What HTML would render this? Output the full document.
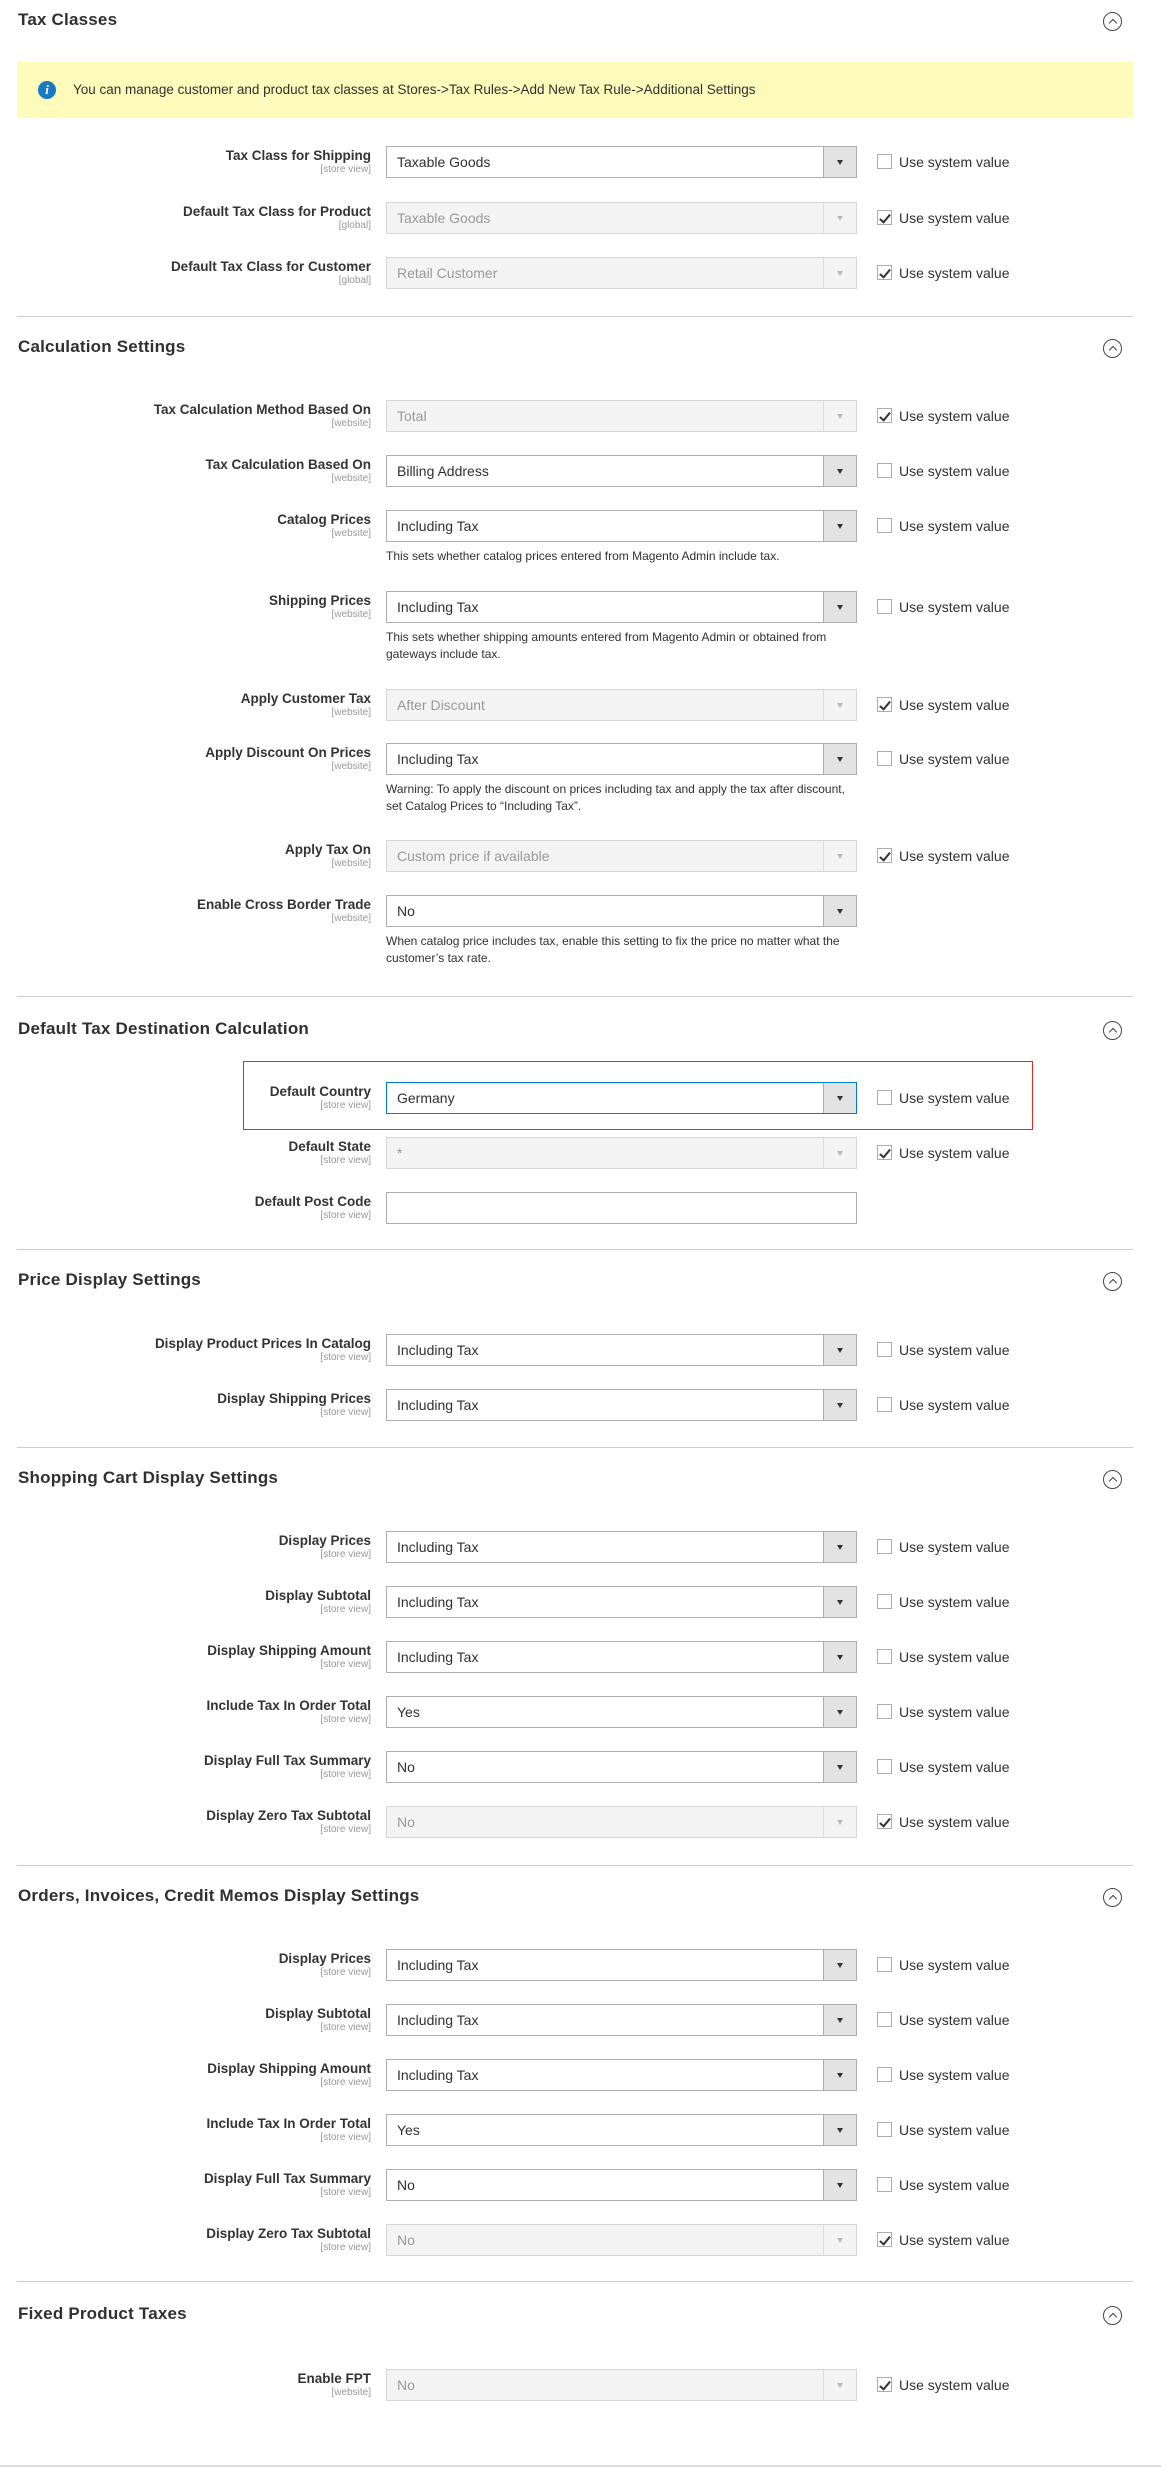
<!DOCTYPE html>
<html><head><meta charset="utf-8"><style>
*{box-sizing:border-box;margin:0;padding:0}
body{width:1161px;height:2467px;position:relative;background:#fff;font-family:"Liberation Sans",sans-serif;color:#303030;overflow:hidden}
.h{position:absolute;left:18px;font-size:17px;font-weight:bold;color:#303030;letter-spacing:0.2px}
.t{position:absolute;left:1103px;width:19px;height:19px;border:1px solid #444;border-radius:50%}
.t::after{content:"";position:absolute;left:6px;top:7px;width:5px;height:5px;border-left:1px solid #444;border-top:1px solid #444;transform:rotate(45deg)}
.sep{position:absolute;left:17px;width:1116px;height:1px;background:#ccc}
.r{position:absolute;left:0;width:1161px;height:32px}
.l{position:absolute;right:790px;top:2px;text-align:right;font-size:13.5px;font-weight:bold;line-height:16px;white-space:nowrap;color:#333}
.l span{display:block;font-size:10px;font-weight:normal;color:#999;line-height:12px}
.s{position:absolute;left:386px;top:0;width:471px;height:32px;border:1px solid #adadad;background:#fff;font-size:14px;line-height:30px;padding-left:10px;color:#303030}
.s i{position:absolute;right:0;top:0;width:33px;height:30px;background:#e3e3e3;border-left:1px solid #adadad}
.s i::after{content:"";position:absolute;left:13px;top:13px;border-left:3.5px solid transparent;border-right:3.5px solid transparent;border-top:5px solid #333}
.s.d{background:#f4f4f4;border-color:#d6d6d6;color:#999}
.s.d i{background:#f4f4f4;border-left-color:#ddd}
.s.d i::after{border-top-color:#bbb}
.s.f{border-color:#007bdb}
.s.n i{display:none}
.c{position:absolute;left:877px;top:8px;font-size:14px;line-height:16px;padding-left:22px;white-space:nowrap;color:#303030}
.c b{position:absolute;left:0;top:0;width:15px;height:15px;border:1px solid #adadad;background:#fff}
.c.k b::after{content:"";position:absolute;left:4px;top:1px;width:4px;height:9px;border-right:2px solid #333;border-bottom:2px solid #333;transform:rotate(40deg)}
.hp{position:absolute;left:386px;top:38px;width:472px;font-size:12px;line-height:17px;color:#303030}
.note{position:absolute;left:17px;top:62px;width:1116px;height:56px;background:#fffbbb}
.note .ic{position:absolute;left:21px;top:19px;width:18px;height:18px;border-radius:50%;background:#1979c3;color:#fff;font:bold italic 13px/18px "Liberation Serif",serif;text-align:center}
.note .tx{position:absolute;left:56px;top:19px;font-size:13.5px;line-height:18px;color:#303030}
.red{position:absolute;left:243px;top:1061px;width:790px;height:69px;border:1px solid #e02b27}
</style></head><body>

<div class="h" style="top:10px">Tax Classes</div><div class="t" style="top:12px"></div>
<div class="note"><div class="ic">i</div><div class="tx">You can manage customer and product tax classes at Stores-&gt;Tax Rules-&gt;Add New Tax Rule-&gt;Additional Settings</div></div>
<div class="r" style="top:146px"><div class="l">Tax Class for Shipping<span>[store view]</span></div><div class="s">Taxable Goods<i></i></div><div class="c"><b></b>Use system value</div></div>
<div class="r" style="top:202px"><div class="l">Default Tax Class for Product<span>[global]</span></div><div class="s d">Taxable Goods<i></i></div><div class="c k"><b></b>Use system value</div></div>
<div class="r" style="top:257px"><div class="l">Default Tax Class for Customer<span>[global]</span></div><div class="s d">Retail Customer<i></i></div><div class="c k"><b></b>Use system value</div></div>
<div class="sep" style="top:316px"></div>

<div class="h" style="top:337px">Calculation Settings</div><div class="t" style="top:339px"></div>
<div class="r" style="top:400px"><div class="l">Tax Calculation Method Based On<span>[website]</span></div><div class="s d">Total<i></i></div><div class="c k"><b></b>Use system value</div></div>
<div class="r" style="top:455px"><div class="l">Tax Calculation Based On<span>[website]</span></div><div class="s">Billing Address<i></i></div><div class="c"><b></b>Use system value</div></div>
<div class="r" style="top:510px"><div class="l">Catalog Prices<span>[website]</span></div><div class="s">Including Tax<i></i></div><div class="c"><b></b>Use system value</div><div class="hp">This sets whether catalog prices entered from Magento Admin include tax.</div></div>
<div class="r" style="top:591px"><div class="l">Shipping Prices<span>[website]</span></div><div class="s">Including Tax<i></i></div><div class="c"><b></b>Use system value</div><div class="hp">This sets whether shipping amounts entered from Magento Admin or obtained from gateways include tax.</div></div>
<div class="r" style="top:689px"><div class="l">Apply Customer Tax<span>[website]</span></div><div class="s d">After Discount<i></i></div><div class="c k"><b></b>Use system value</div></div>
<div class="r" style="top:743px"><div class="l">Apply Discount On Prices<span>[website]</span></div><div class="s">Including Tax<i></i></div><div class="c"><b></b>Use system value</div><div class="hp">Warning: To apply the discount on prices including tax and apply the tax after discount, set Catalog Prices to “Including Tax”.</div></div>
<div class="r" style="top:840px"><div class="l">Apply Tax On<span>[website]</span></div><div class="s d">Custom price if available<i></i></div><div class="c k"><b></b>Use system value</div></div>
<div class="r" style="top:895px"><div class="l">Enable Cross Border Trade<span>[website]</span></div><div class="s">No<i></i></div><div class="hp">When catalog price includes tax, enable this setting to fix the price no matter what the customer’s tax rate.</div></div>
<div class="sep" style="top:996px"></div>

<div class="h" style="top:1019px">Default Tax Destination Calculation</div><div class="t" style="top:1021px"></div>
<div class="red"></div>
<div class="r" style="top:1082px"><div class="l">Default Country<span>[store view]</span></div><div class="s f">Germany<i></i></div><div class="c"><b></b>Use system value</div></div>
<div class="r" style="top:1137px"><div class="l">Default State<span>[store view]</span></div><div class="s d">*<i></i></div><div class="c k"><b></b>Use system value</div></div>
<div class="r" style="top:1192px"><div class="l">Default Post Code<span>[store view]</span></div><div class="s n"></div></div>
<div class="sep" style="top:1249px"></div>

<div class="h" style="top:1270px">Price Display Settings</div><div class="t" style="top:1272px"></div>
<div class="r" style="top:1334px"><div class="l">Display Product Prices In Catalog<span>[store view]</span></div><div class="s">Including Tax<i></i></div><div class="c"><b></b>Use system value</div></div>
<div class="r" style="top:1389px"><div class="l">Display Shipping Prices<span>[store view]</span></div><div class="s">Including Tax<i></i></div><div class="c"><b></b>Use system value</div></div>
<div class="sep" style="top:1447px"></div>

<div class="h" style="top:1468px">Shopping Cart Display Settings</div><div class="t" style="top:1470px"></div>
<div class="r" style="top:1531px"><div class="l">Display Prices<span>[store view]</span></div><div class="s">Including Tax<i></i></div><div class="c"><b></b>Use system value</div></div>
<div class="r" style="top:1586px"><div class="l">Display Subtotal<span>[store view]</span></div><div class="s">Including Tax<i></i></div><div class="c"><b></b>Use system value</div></div>
<div class="r" style="top:1641px"><div class="l">Display Shipping Amount<span>[store view]</span></div><div class="s">Including Tax<i></i></div><div class="c"><b></b>Use system value</div></div>
<div class="r" style="top:1696px"><div class="l">Include Tax In Order Total<span>[store view]</span></div><div class="s">Yes<i></i></div><div class="c"><b></b>Use system value</div></div>
<div class="r" style="top:1751px"><div class="l">Display Full Tax Summary<span>[store view]</span></div><div class="s">No<i></i></div><div class="c"><b></b>Use system value</div></div>
<div class="r" style="top:1806px"><div class="l">Display Zero Tax Subtotal<span>[store view]</span></div><div class="s d">No<i></i></div><div class="c k"><b></b>Use system value</div></div>
<div class="sep" style="top:1865px"></div>

<div class="h" style="top:1886px">Orders, Invoices, Credit Memos Display Settings</div><div class="t" style="top:1888px"></div>
<div class="r" style="top:1949px"><div class="l">Display Prices<span>[store view]</span></div><div class="s">Including Tax<i></i></div><div class="c"><b></b>Use system value</div></div>
<div class="r" style="top:2004px"><div class="l">Display Subtotal<span>[store view]</span></div><div class="s">Including Tax<i></i></div><div class="c"><b></b>Use system value</div></div>
<div class="r" style="top:2059px"><div class="l">Display Shipping Amount<span>[store view]</span></div><div class="s">Including Tax<i></i></div><div class="c"><b></b>Use system value</div></div>
<div class="r" style="top:2114px"><div class="l">Include Tax In Order Total<span>[store view]</span></div><div class="s">Yes<i></i></div><div class="c"><b></b>Use system value</div></div>
<div class="r" style="top:2169px"><div class="l">Display Full Tax Summary<span>[store view]</span></div><div class="s">No<i></i></div><div class="c"><b></b>Use system value</div></div>
<div class="r" style="top:2224px"><div class="l">Display Zero Tax Subtotal<span>[store view]</span></div><div class="s d">No<i></i></div><div class="c k"><b></b>Use system value</div></div>
<div class="sep" style="top:2281px"></div>

<div class="h" style="top:2304px">Fixed Product Taxes</div><div class="t" style="top:2306px"></div>
<div class="r" style="top:2369px"><div class="l">Enable FPT<span>[website]</span></div><div class="s d">No<i></i></div><div class="c k"><b></b>Use system value</div></div>
<div style="position:absolute;left:0;top:2465px;width:1161px;height:2px;background:#ddd"></div>
</body></html>
